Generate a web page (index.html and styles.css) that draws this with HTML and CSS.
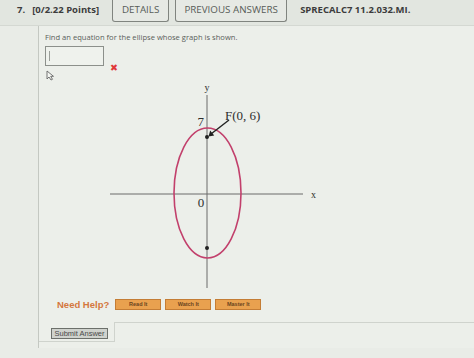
FILE: index.html
```html
<!DOCTYPE html>
<html>
<head>
<meta charset="utf-8">
<link rel="stylesheet" href="styles.css">
</head>
<body>
<div class="header">
  <span class="qnum">7.</span>
  <span class="points">[0/2.22 Points]</span>
  <span class="tab tab-details">DETAILS</span>
  <span class="tab tab-prev">PREVIOUS ANSWERS</span>
  <span class="code">SPRECALC7 11.2.032.MI.</span>
</div>
<div class="main">
  <div class="content">
    <p class="prompt">Find an equation for the ellipse whose graph is shown.</p>
    <div class="answer-row">
      <div class="input"><span class="caret"></span></div>
      <span class="wrong">&#x2716;</span>
    </div>
    <svg class="cursor" width="10" height="11" viewBox="0 0 10 11">
      <path d="M1 1 L1 9 L3 7 L5 10 L6.5 9.3 L4.7 6.4 L7.5 6.3 Z" fill="#f4f6f2" stroke="#666" stroke-width="0.9" stroke-linejoin="round"/>
    </svg>
    <svg class="graph" width="230" height="215" viewBox="0 0 230 215">
      <line x1="10" y1="113" x2="203" y2="113" stroke="#6a6a6a" stroke-width="1"/>
      <line x1="107" y1="14" x2="107" y2="207" stroke="#6a6a6a" stroke-width="1"/>
      <ellipse cx="107.5" cy="112" rx="33.5" ry="65" fill="none" stroke="#c2406c" stroke-width="1.6"/>
      <text x="107" y="10" class="lbl small" text-anchor="middle">y</text>
      <text x="211" y="117" class="lbl small">x</text>
      <text x="104" y="45" class="lbl" text-anchor="end">7</text>
      <text x="101" y="126" class="lbl" text-anchor="middle">0</text>
      <text x="125" y="39" class="lbl">F(0, 6)</text>
      <circle cx="107" cy="56" r="2" fill="#222"/>
      <circle cx="107" cy="167" r="2" fill="#222"/>
      <line x1="129" y1="39" x2="111" y2="53" stroke="#222" stroke-width="1.4"/>
      <path d="M108.5 55.5 L110.2 49.6 L114.2 54.6 Z" fill="#222"/>
    </svg>
    <div class="help">
      <span class="help-label">Need Help?</span>
      <span class="help-btn">Read It</span>
      <span class="help-btn">Watch It</span>
      <span class="help-btn">Master It</span>
    </div>
  </div>
  <div class="footer">
    <div class="submit-cell"><span class="submit">Submit Answer</span></div>
    <div class="rest-cell"></div>
  </div>
</div>
</body>
</html>
```
FILE: styles.css
```css
html, body {
  margin: 0;
  padding: 0;
}
body {
  width: 474px;
  height: 358px;
  overflow: hidden;
  background: #e9ece7;
  font-family: "Open Sans", "DejaVu Sans", sans-serif;
  color: #3a3a3a;
}
.header {
  height: 26px;
  display: flex;
  align-items: flex-start;
  background: #e2e6e0;
  border-bottom: 1px solid #d4d8d2;
  box-sizing: border-box;
  padding-left: 17px;
}
.qnum, .points, .code {
  font-size: 9.5px;
  font-weight: 700;
  line-height: 20px;
  color: #3c3c3c;
}
.points {
  margin-left: 7px;
}
.tab {
  box-sizing: border-box;
  height: 23px;
  margin-top: -1px;
  border: 1px solid #80847f;
  border-top: none;
  border-radius: 0 0 3px 3px;
  font-size: 9.8px;
  line-height: 21px;
  color: #585c58;
  text-align: center;
  background: #e6e9e4;
}
.tab-details {
  width: 57px;
  margin-left: 13px;
}
.tab-prev {
  width: 112px;
  margin-left: 6px;
}
.code {
  margin-left: 13px;
}
.main {
  margin-left: 38px;
  border-left: 1px solid #c4c8c2;
  background: #ecefea;
  height: 322px;
}
.content {
  padding-left: 6px;
  padding-top: 6px;
}
.prompt {
  margin: 0;
  font-size: 7.6px;
  line-height: 11px;
  color: #5a5e5a;
}
.answer-row {
  display: flex;
  align-items: flex-end;
  margin-top: 3px;
}
.input {
  box-sizing: border-box;
  width: 59px;
  height: 20px;
  border: 1px solid #8c908b;
  background: #eff2ed;
  padding: 4px 3px;
}
.caret {
  display: block;
  width: 1px;
  height: 10px;
  background: #9a9e99;
}
.wrong {
  color: #e0383a;
  font-size: 9.5px;
  font-weight: 700;
  margin-left: 6px;
  margin-bottom: -7px;
  font-family: "DejaVu Sans", sans-serif;
}
.cursor {
  display: block;
  margin-left: 1px;
  margin-top: 4px;
}
.graph {
  display: block;
  margin-left: 55px;
  margin-top: 0;
}
.lbl {
  font-family: "Liberation Serif", "DejaVu Serif", serif;
  font-size: 13px;
  fill: #2e2e2e;
}
.lbl.small {
  font-size: 10px;
}
.help {
  display: flex;
  align-items: center;
  margin-top: 1px;
  margin-left: 12px;
  height: 14px;
}
.help-label {
  font-family: "Liberation Sans", Arial, sans-serif;
  font-size: 9.5px;
  font-weight: 700;
  color: #d4773e;
  margin-right: 6px;
}
.help-btn {
  box-sizing: border-box;
  width: 46px;
  height: 11px;
  margin-right: 4px;
  background: #e9a14f;
  border: 1px solid #c47d35;
  font-family: "Liberation Sans", Arial, sans-serif;
  font-size: 5.5px;
  font-weight: 700;
  color: #6a4420;
  text-align: center;
  line-height: 9px;
}
.footer {
  display: flex;
  margin-top: 11px;
}
.submit-cell {
  box-sizing: border-box;
  width: 76px;
  height: 20px;
  border-right: 1px solid #cfd3cd;
  border-bottom: 1px solid #cfd3cd;
  padding-top: 6px;
  padding-left: 12px;
}
.submit {
  display: block;
  box-sizing: border-box;
  width: 57px;
  height: 11px;
  border: 1px solid #6c706b;
  background: #cfd2cd;
  font-family: "Liberation Sans", Arial, sans-serif;
  font-size: 7.5px;
  line-height: 9px;
  color: #4a4a4a;
  text-align: center;
}
.rest-cell {
  flex: 1;
  border-top: 1px solid #cfd3cd;
}
```
